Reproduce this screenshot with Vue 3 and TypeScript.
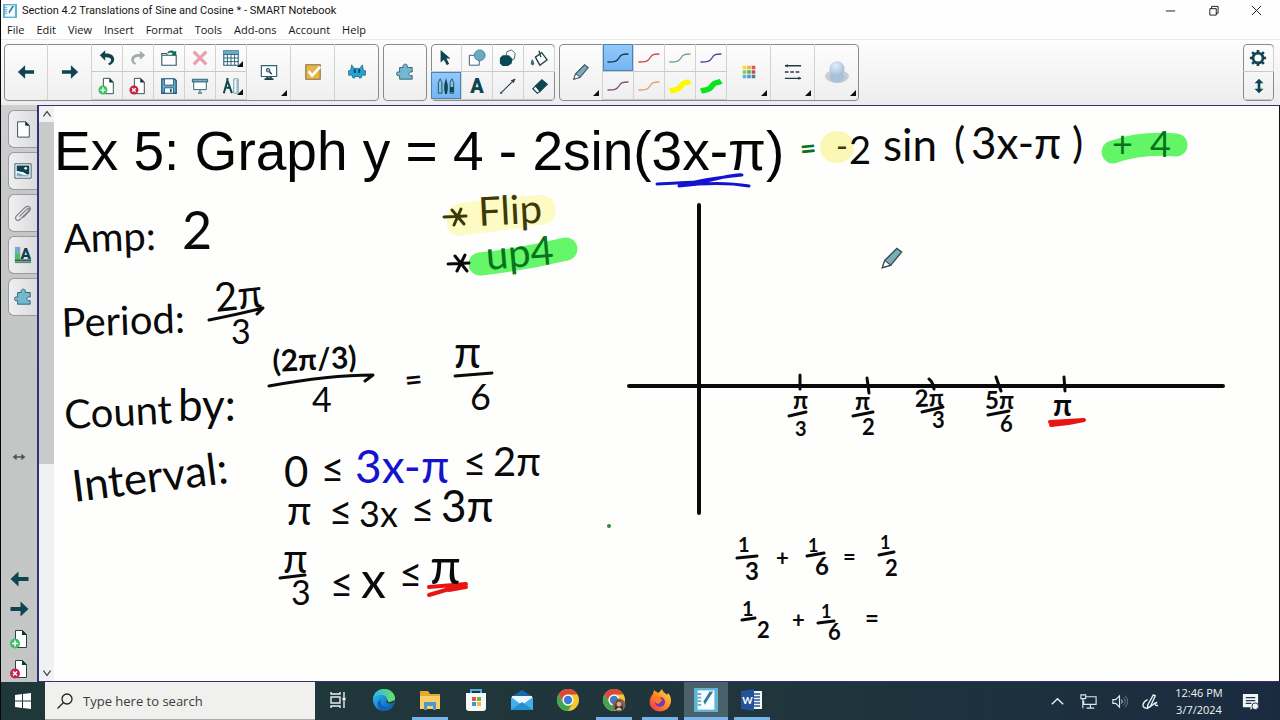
<script setup lang="ts">
interface Tool { icon: string; label: string; big?: boolean; more?: boolean; active?: boolean; ink?: string; wide?: boolean }
interface Note { t: string; x: number; y: number; s: number; r?: number; c?: string }

const menus: string[] = ['File', 'Edit', 'View', 'Insert', 'Format', 'Tools', 'Add-ons', 'Account', 'Help']

const groups: Tool[][] = [
  [
    { icon: 'back', label: 'Previous page', big: true },
    { icon: 'forward', label: 'Next page', big: true },
    { icon: 'undo', label: 'Undo' },
    { icon: 'page-add', label: 'Add page' },
    { icon: 'redo', label: 'Redo' },
    { icon: 'page-del', label: 'Delete page' },
    { icon: 'open', label: 'Open' },
    { icon: 'save', label: 'Save' },
    { icon: 'cross', label: 'Delete' },
    { icon: 'shade', label: 'Screen shade' },
    { icon: 'table', label: 'Table', more: true },
    { icon: 'measure', label: 'Measurement tools', more: true },
    { icon: 'monitor', label: 'View screens', big: true, more: true },
    { icon: 'check', label: 'Response', big: true },
    { icon: 'monster', label: 'Activity builder', big: true },
  ],
  [{ icon: 'puzzle', label: 'Add-ons', big: true }],
  [
    { icon: 'select', label: 'Select' },
    { icon: 'pens', label: 'Pens', active: true },
    { icon: 'shapes', label: 'Shapes' },
    { icon: 'text', label: 'Text' },
    { icon: 'polygons', label: 'Regular polygons' },
    { icon: 'line', label: 'Lines' },
    { icon: 'fill', label: 'Fill' },
    { icon: 'eraser', label: 'Eraser' },
  ],
  [
    { icon: 'pencil', label: 'Pen types', big: true, more: true },
    { icon: 'ink', label: 'Black pen', ink: '#123c58', active: true },
    { icon: 'ink', label: 'Purple pen', ink: '#81507e' },
    { icon: 'ink', label: 'Red pen', ink: '#c94a55' },
    { icon: 'ink', label: 'Orange pen', ink: '#e0a078' },
    { icon: 'ink', label: 'Green pen', ink: '#7ba184' },
    { icon: 'ink', label: 'Yellow highlighter', ink: '#fbf800', wide: true },
    { icon: 'ink', label: 'Blue pen', ink: '#4c4a9e' },
    { icon: 'ink', label: 'Green highlighter', ink: '#09e51c', wide: true },
    { icon: 'colors', label: 'Color', big: true, more: true },
    { icon: 'lines', label: 'Line style', big: true, more: true },
    { icon: 'stamp', label: 'Transparency', big: true, more: true },
  ],
]

const tabs = [
  { icon: 'page', label: 'Page sorter' },
  { icon: 'gallery', label: 'Gallery' },
  { icon: 'clip', label: 'Attachments' },
  { icon: 'props', label: 'Properties' },
  { icon: 'puzzle', label: 'Add-ons' },
]
const sideActions = [
  { icon: 'back', label: 'Previous page' },
  { icon: 'forward', label: 'Next page' },
  { icon: 'page-add', label: 'Add page' },
  { icon: 'page-del', label: 'Delete page' },
]
const apps = [
  { icon: 'taskview', label: 'Task View' },
  { icon: 'edge', label: 'Microsoft Edge' },
  { icon: 'folder', label: 'File Explorer', open: true },
  { icon: 'store', label: 'Microsoft Store' },
  { icon: 'mail', label: 'Mail' },
  { icon: 'chrome', label: 'Google Chrome' },
  { icon: 'chrome-user', label: 'Google Chrome profile', open: true },
  { icon: 'firefox', label: 'Firefox', open: true },
  { icon: 'notebook', label: 'SMART Notebook', open: true, active: true },
  { icon: 'word', label: 'Word', open: true },
]
const tray = [
  { icon: 'chevron', label: 'Show hidden icons' },
  { icon: 'network', label: 'Network' },
  { icon: 'volume', label: 'Volume' },
  { icon: 'inkpen', label: 'Ink workspace' },
]

const blue = '#1414cf'
const olive = '#3b3a08'
const green = '#08731c'

const notes: Note[] = [
  { t: 'Amp:', x: 64, y: 253, s: 40, r: -2 },
  { t: '2', x: 182, y: 249, s: 52 },
  { t: 'Period:', x: 62, y: 337, s: 40, r: -2 },
  { t: '2π', x: 216, y: 312, s: 40, r: -6 },
  { t: '3', x: 231, y: 344, s: 34 },
  { t: 'Count', x: 65, y: 429, s: 40, r: -3 },
  { t: 'by:', x: 178, y: 421, s: 44 },
  { t: 'Interval:', x: 74, y: 502, s: 44, r: -7 },
  { t: '(2π/3)', x: 273, y: 372, s: 30, r: -3 },
  { t: '4', x: 312, y: 412, s: 34 },
  { t: '=', x: 406, y: 391, s: 30, r: -6 },
  { t: 'π', x: 454, y: 368, s: 44 },
  { t: '6', x: 470, y: 410, s: 36 },
  { t: '0', x: 284, y: 487, s: 42 },
  { t: '≤', x: 321, y: 483, s: 40 },
  { t: '3x-π', x: 355, y: 483, s: 46, c: blue },
  { t: '≤', x: 463, y: 477, s: 40 },
  { t: '2π', x: 493, y: 476, s: 40 },
  { t: 'π', x: 287, y: 525, s: 40 },
  { t: '≤', x: 329, y: 526, s: 40 },
  { t: '3x', x: 359, y: 527, s: 36 },
  { t: '≤', x: 411, y: 523, s: 40 },
  { t: '3π', x: 441, y: 522, s: 44 },
  { t: 'π', x: 283, y: 573, s: 40 },
  { t: '3', x: 291, y: 605, s: 34 },
  { t: '≤', x: 330, y: 598, s: 40 },
  { t: 'x', x: 361, y: 598, s: 50 },
  { t: '≤', x: 399, y: 588, s: 40 },
  { t: 'π', x: 430, y: 584, s: 50 },
  { t: 'Flip', x: 479, y: 226, s: 40, r: -3, c: olive },
  { t: 'up4', x: 487, y: 270, s: 40, r: -5, c: green },
  { t: '=', x: 801, y: 159, s: 28, r: -6, c: green },
  { t: '-', x: 836, y: 158, s: 32, c: olive },
  { t: '2', x: 849, y: 164, s: 38 },
  { t: 'sin', x: 883, y: 161, s: 44 },
  { t: '(', x: 954, y: 158, s: 42 },
  { t: '3x-π', x: 971, y: 159, s: 44 },
  { t: ')', x: 1072, y: 158, s: 42 },
  { t: '+', x: 1112, y: 157, s: 36, c: green },
  { t: '4', x: 1150, y: 157, s: 36, c: green },
  { t: 'π', x: 793, y: 409, s: 24 },
  { t: '3', x: 795, y: 436, s: 20 },
  { t: 'π', x: 855, y: 410, s: 24 },
  { t: '2', x: 862, y: 435, s: 22 },
  { t: '2π', x: 915, y: 407, s: 24, r: -2 },
  { t: '3', x: 932, y: 428, s: 22 },
  { t: '5π', x: 985, y: 409, s: 24 },
  { t: '6', x: 1000, y: 432, s: 22 },
  { t: 'π', x: 1053, y: 416, s: 30 },
  { t: '1', x: 738, y: 552, s: 20 },
  { t: '3', x: 745, y: 580, s: 24 },
  { t: '+', x: 776, y: 566, s: 22 },
  { t: '1', x: 808, y: 552, s: 18 },
  { t: '6', x: 815, y: 575, s: 24 },
  { t: '=', x: 843, y: 565, s: 22 },
  { t: '1', x: 880, y: 549, s: 18 },
  { t: '2', x: 885, y: 576, s: 22 },
  { t: '1', x: 742, y: 616, s: 20 },
  { t: '2', x: 757, y: 638, s: 22 },
  { t: '+', x: 792, y: 628, s: 22 },
  { t: '1', x: 821, y: 618, s: 18 },
  { t: '6', x: 828, y: 640, s: 22 },
  { t: '=', x: 865, y: 627, s: 24 },
]

const place = (n: Note): string => `translate(${n.x} ${n.y}) rotate(${n.r ?? 0})`
</script>

<template>
  <div class="window">
    <svg class="defs" aria-hidden="true">
      <defs>
        <linearGradient id="edgeA" x1="0" y1="0" x2="1" y2="1"><stop offset="0" stop-color="#35c1f1" /><stop offset=".5" stop-color="#1b8ad8" /><stop offset="1" stop-color="#0c4fa0" /></linearGradient>
        <linearGradient id="edgeB" x1="0" y1="0" x2="1" y2="0"><stop offset="0" stop-color="#2fb8e8" /><stop offset="1" stop-color="#6be25e" /></linearGradient>
        <linearGradient id="fire" x1="1" y1="0" x2="0" y2="1"><stop offset="0" stop-color="#ffe14a" /><stop offset=".5" stop-color="#ff8a1e" /><stop offset="1" stop-color="#f0245c" /></linearGradient>
        <radialGradient id="glass" cx=".4" cy=".3" r=".8"><stop offset="0" stop-color="#e3edf7" /><stop offset="1" stop-color="#9ab6d4" /></radialGradient>
        <symbol id="back" viewBox="0 0 20 20"><path d="M1 10 9 2.500V8h10v4H9v5.500z" fill="#0f4550" /></symbol>
        <symbol id="forward" viewBox="0 0 20 20"><path d="M19 10 11 2.500V8H1v4h10v5.500z" fill="#0f4550" /></symbol>
        <symbol id="undo" viewBox="0 0 20 20"><path d="M2 7 8 1.500V5c6-.5 10 2 10 6.500 0 3-2 5-5 6.500l-2-1.500c3-1.500 3.500-3 3.500-4.500 0-2-2.500-3-6.500-2.800V13z" fill="#0f4550" /></symbol>
        <symbol id="redo" viewBox="0 0 20 20"><path d="M18 7l-6-5v3.500C6 5 2.500 8 2.500 12c0 2.500 1.500 4.500 4 5.500l1.500-1.500c-2-1-2.700-2.500-2.500-4 .3-2.500 3-3.500 6.500-3.300V12z" fill="#a3abac" /></symbol>
        <symbol id="page" viewBox="0 0 20 20"><path d="M4 2h9l4 4v13H4z" fill="#fff" stroke="#24444c" stroke-width="1" /><path d="M12.500 1.500 17.500 6.500h-5z" fill="#12333a" /></symbol>
        <symbol id="page-add" viewBox="0 0 20 20"><path d="M6 1.500h7l4 4V18.500H6z" fill="#fff" stroke="#24444c" /><path d="M12.500 1 17.500 6h-5z" fill="#12333a" /><circle cx="5.500" cy="14.500" r="5" fill="#3fbd62" /><path d="M5.500 11.500v6M2.500 14.500h6" stroke="#fff" stroke-width="1.500" /></symbol>
        <symbol id="page-del" viewBox="0 0 20 20"><path d="M6 1.500h7l4 4V18.500H6z" fill="#fff" stroke="#24444c" /><path d="M12.500 1 17.500 6h-5z" fill="#12333a" /><circle cx="5.500" cy="14.500" r="5" fill="#c62349" /><path d="m3.500 12.500 4 4m0-4-4 4" stroke="#fff" stroke-width="1.500" /></symbol>
        <symbol id="open" viewBox="0 0 20 20"><path d="M2 7V5h5l1.500 2M2 7h16v11H2z" fill="#fff" stroke="#295a5b" stroke-width="1.200" /><path d="M8 4c2-3 6-3 8-1l2-1v5h-5.500l1.700-1.700C12.500 3.500 10.500 3.500 9 5z" fill="#116b58" /></symbol>
        <symbol id="save" viewBox="0 0 20 20"><path d="M2 2h14l2 2v14H2z" fill="#6da9c8" stroke="#225b77" stroke-width="1.500" /><path d="M5 2h10v7H5zM5 12h10v6H5z" fill="#f5fbff" stroke="#225b77" /><path d="M11 13h2v4h-2z" fill="#225b77" /></symbol>
        <symbol id="cross" viewBox="0 0 20 20"><path d="m3 3 14 14M17 3 3 17" stroke="#e6a1ad" stroke-width="3.500" /></symbol>
        <symbol id="shade" viewBox="0 0 20 20"><path d="M3 5h14v9H3z" fill="#fff" stroke="#245965" /><path d="M1.500 2.500h17v3h-17z" fill="#75abc7" stroke="#245965" /><path d="M10 14v2m-2 2 2-2 2 2z" stroke="#245965" fill="none" /></symbol>
        <symbol id="table" viewBox="0 0 20 20"><path d="M2 2h16v16H2z" fill="#fff" stroke="#205e71" stroke-width="1.200" /><path d="M2 2h16v4H2z" fill="#70a9c6" /><path d="M2 6h16M2 10h16M2 14h16M6 6v12m4-12v12m4-12v12" stroke="#205e71" /></symbol>
        <symbol id="measure" viewBox="0 0 20 20"><path d="M6 1v3M6 4 2 18M6 4l5 14M3 12h7" stroke="#0f4550" stroke-width="2.200" fill="none" /><path d="M13 2h5v16h-5zM16 4h2m-2 2h2m-2 2h2m-2 2h2m-2 2h2m-2 2h2m-2 2h2" fill="#e9f2f5" stroke="#729aa8" /></symbol>
        <symbol id="monitor" viewBox="0 0 20 20"><path d="M1.500 3h17v12h-17z" fill="#fff" stroke="#2c6275" stroke-width="1.300" /><path d="M8 15v2h4v-2M5 18h10" stroke="#24404a" stroke-width="2" fill="none" /><circle cx="9" cy="8" r="2" fill="#8fbbcf" stroke="#24404a" /><path d="m10.500 9.500 2.500 3" stroke="#24404a" stroke-width="1.500" /></symbol>
        <symbol id="check" viewBox="0 0 20 20"><path d="M2 2h16v16H2z" fill="#e9b34a" stroke="#85713f" stroke-width="1.200" /><path d="m5 9 4 5 9-10" stroke="#fff" stroke-width="3" fill="none" /></symbol>
        <symbol id="monster" viewBox="0 0 20 20"><path d="m4 2 3 4h6l3-4 1 6 3 1-1 5-3-1-1 3-2 1-1-2H8l-1 2-2-1-1-3-3 1-1-5 3-1z" fill="#23a4d3" stroke="#0d526d" stroke-width=".7" /><path d="M6.500 7h2v4h-2zm5 0h2v4h-2z" fill="#0b3c55" /></symbol>
        <symbol id="puzzle" viewBox="0 0 20 20"><path d="M4 5h4c-1.500-5 6-5 4.500 0H18v5c-5-1-5 5 0 4v4H4v-4c-5 1-5-5 0-4z" fill="#73b7d1" stroke="#315e70" /></symbol>
        <symbol id="select" viewBox="0 0 20 20"><path d="M4 1v14l3.500-3L11 18l2.500-1.500-3-6H15z" fill="#0f4550" /></symbol>
        <symbol id="pens" viewBox="0 0 20 20"><path d="M1.500 6 3.500 2l2 4v12h-4zM14.500 6l2-4 2 4v12h-4z" fill="#8ebfd9" stroke="#164e65" /><path d="m8 9 2-8 2 8v5l-1 5H9l-1-5zM14.500 11h4v6h-4z" fill="#0f4550" /></symbol>
        <symbol id="shapes" viewBox="0 0 20 20"><path d="M1.500 7h11v11h-11z" fill="#fff" stroke="#2d5260" /><circle cx="13" cy="7" r="6" fill="#6aaac5" stroke="#437c94" /></symbol>
        <symbol id="text" viewBox="0 0 20 20"><text x="10" y="18" text-anchor="middle" font-family="Roboto, sans-serif" font-weight="900" font-size="22" fill="#0f4550">A</text></symbol>
        <symbol id="polygons" viewBox="0 0 20 20"><path d="m9 3 5-2 4 4-1 6-4 2-6-3z" fill="#fff" stroke="#35606a" /><path d="M4 7h7l4 4-1 5-4 3H4l-3-3V10z" fill="#0a4852" /></symbol>
        <symbol id="line" viewBox="0 0 20 20"><path d="M2 18 18 2" stroke="#24414d" stroke-width="1.300" /><path d="m18 2-5 1.500L16.500 7zM1 19l1-3 2 2z" fill="#24414d" /></symbol>
        <symbol id="fill" viewBox="0 0 20 20"><path d="m6 9 7-5 6 8-8 6z" fill="#fff" stroke="#24444c" stroke-width="1.500" /><path d="m10 2 2 7" fill="none" stroke="#24444c" stroke-width="1.500" /><path d="M2.500 11c-3 5-1 7 .5 7s3-2-.5-7" fill="#3a6873" /></symbol>
        <symbol id="eraser" viewBox="0 0 20 20"><path d="m12 3 6 5-8 8-5-6z" fill="#0e4551" stroke="#0e4551" stroke-width="1.300" /><path d="m5 10 5 6-3 2-5-5z" fill="#fff" stroke="#0e4551" stroke-width="1.300" /></symbol>
        <symbol id="pencil" viewBox="0 0 20 20"><path d="m2 18 2-6L14 2l4 3L9 16z" fill="#7fabb9" stroke="#37525b" stroke-width="1.200" /><path d="m2 18 2-6 5 4z" fill="#fff" stroke="#37525b" /></symbol>
        <symbol id="ink" viewBox="0 0 24 16"><path d="M2 12c6 0 9-.5 11-4s4-4 9-4" fill="none" stroke="currentColor" stroke-width="1.400" stroke-linecap="round" /></symbol>
        <symbol id="marker" viewBox="0 0 24 16"><path d="M2 13c6-2 8 0 11-5s5-2 9-5" fill="none" stroke="currentColor" stroke-width="5.500" /></symbol>
        <symbol id="colors" viewBox="0 0 20 20"><path d="M3 3h4v4H3z" fill="#f1d83e" /><path d="M8 3h4v4H8z" fill="#f2b23d" /><path d="M13 3h4v4h-4z" fill="#dd5848" /><path d="M3 8h4v4H3z" fill="#8acb5d" /><path d="M8 8h4v4H8z" fill="#52b84e" /><path d="M13 8h4v4h-4z" fill="#bd4d5c" /><path d="M3 13h4v4H3z" fill="#5db3dc" /><path d="M8 13h4v4H8z" fill="#4e94d0" /><path d="M13 13h4v4h-4z" fill="#557b8a" /></symbol>
        <symbol id="lines" viewBox="0 0 20 20"><path d="M1 3h18M1 17h18" stroke="#213d44" stroke-width="1.500" /><path d="M1 10h18" stroke="#213d44" stroke-width="1.500" stroke-dasharray="4 2" /><path d="M1 3l3-2v4zm18 14-3-2v4z" fill="#213d44" /></symbol>
        <symbol id="stamp" viewBox="0 0 24 24"><ellipse cx="12" cy="16" rx="11" ry="6" fill="#c9ced5" /><ellipse cx="12" cy="17" rx="7" ry="5" fill="#a9c2dc" /><circle cx="12" cy="9" r="7" fill="url(#glass)" /></symbol>
        <symbol id="gear" viewBox="0 0 20 20"><circle cx="10" cy="10" r="5.500" fill="#fff" stroke="#0f4550" stroke-width="3" /><path d="M10 1v3m0 12v3M1 10h3m12 0h3M3.500 3.500l2.500 2.500m8 8 2.500 2.500M16.500 3.500 14 6m-8 8-2.500 2.500" stroke="#0f4550" stroke-width="3" /></symbol>
        <symbol id="updown" viewBox="0 0 20 20"><path d="m10 2 5 5h-3.500v6H15l-5 5-5-5h3.500V7H5z" fill="#0f4550" /></symbol>
        <symbol id="leftright" viewBox="0 0 20 20"><path d="m2 10 5-4v3h6V6l5 4-5 4v-3H7v3z" fill="#4d575a" /></symbol>
        <symbol id="gallery" viewBox="0 0 20 20"><path d="M1 2h18v16H1z" fill="#fff" stroke="#28535f" /><path d="M3 4h14v10c-5 0-5-3-8-3-2 0-3-1-6-1z" fill="#0e4050" /><path d="M3 12c4 0 5 3 14 3v1H3z" fill="#73acc8" /><circle cx="13" cy="7" r="1.500" fill="#fff" /></symbol>
        <symbol id="clip" viewBox="0 0 20 20"><path d="m6 14 8-8c3-2 4 0 2 2l-9 9c-4 3-7-1-4-4l9-9c4-3 8 0 5 4l-7 7" fill="none" stroke="#7b8083" stroke-width="1.300" /></symbol>
        <symbol id="props" viewBox="0 0 20 20"><path d="M1 1h6v7H1z" fill="#78a9ce" /><path d="M1 8h6v7H1z" fill="#4dbd63" /><path d="M1 17h18v2H1z" fill="#4c8d68" /><path d="M1 15h18v1.500H1z" fill="#173a43" /><text x="13" y="14" text-anchor="middle" font-family="Roboto, sans-serif" font-weight="900" font-size="17" fill="#123f4d">A</text></symbol>
        <symbol id="notebook" viewBox="0 0 20 20"><path d="M0 0h20v20H0z" fill="#5fb3d5" /><path d="M3 2h14v16H3z" fill="#f8fdff" /><path d="M3 5h3M3 8h3m-3 3h3m-3 3h3" stroke="#5fb3d5" stroke-width="1.500" /><path d="M16 3 9 14l-1-3 5-8z" fill="#357d9c" /></symbol>
        <symbol id="win" viewBox="0 0 16 16"><path d="m0 2 7-1v6.500H0zm8-1 8-1v7.500H8zM0 8.500h7V15l-7-1zm8 0h8V16l-8-1z" fill="#fff" /></symbol>
        <symbol id="taskview" viewBox="0 0 24 24"><path d="M5 9h9v6H5zM5 4v2h9V4M5 20v-2h9v2M18 4v5m0 4v7" fill="none" stroke="#e8eeee" stroke-width="1.400" /><path d="M16.500 9.500h3v3h-3z" fill="#fff" /></symbol>
        <symbol id="edge" viewBox="0 0 24 24"><circle cx="12" cy="12" r="11" fill="url(#edgeA)" /><path d="M1 11C2 3 8 1 12 1c7 0 11 5 11 9 0 5-5 6-8 5-2-1 0-2 0-4 0-3-4-5-8-4-3 .5-5 2-6 4z" fill="url(#edgeB)" /><path d="M9 11c-2 5 2 10 12 8-4 5-10 4-12 3-5-3-4-9 0-11z" fill="#1260b4" /><path d="M15 15c-2-1 0-2 0-4 2 3-1 5 8 1-1 4-5 4-8 3z" fill="#203638" /></symbol>
        <symbol id="folder" viewBox="0 0 24 24"><path d="M2 3h8l2 3h10v15H2z" fill="#e5a832" /><path d="M2 8h20v13H2z" fill="#f7d067" /><path d="M6 22v-8h12v8h-3v-4H9v4z" fill="#4e98ce" /></symbol>
        <symbol id="store" viewBox="0 0 24 24"><path d="M7 6V2h10v4" stroke="#48b1e4" stroke-width="2" fill="none" /><path d="M2 5h20v15q0 3-3 3H5q-3 0-3-3z" fill="#f6f8f9" /><path d="M8 9h4v4H8z" fill="#e15b34" /><path d="M13 9h4v4h-4z" fill="#6fb542" /><path d="M8 14h4v4H8z" fill="#3598db" /><path d="M13 14h4v4h-4z" fill="#efba39" /></symbol>
        <symbol id="mail" viewBox="0 0 24 24"><path d="m1 9 11-7 11 7v13H1z" fill="#126baf" /><path d="M2 8h20v12H2z" fill="#edf6fb" /><path d="m1 9 11 8 11-8v13H1z" fill="#42afe8" /><path d="m1 22 11-8 11 8z" fill="#258fd2" /></symbol>
        <symbol id="chrome" viewBox="0 0 24 24"><circle cx="12" cy="12" r="11" fill="#f4c82f" /><path d="M2.500 6.500A11 11 0 0 1 21.500 6.500H12a5.500 5.500 0 0 0-5 8z" fill="#dd483c" /><path d="M2.500 6.500A11 11 0 0 0 12 23l5-8.500a5.500 5.500 0 0 1-10 0z" fill="#40a456" /><circle cx="12" cy="12" r="5.500" fill="#fff" /><circle cx="12" cy="12" r="4.200" fill="#347ed9" /></symbol>
        <symbol id="chrome-user" viewBox="0 0 24 24"><use href="#chrome" width="24" height="24" /><circle cx="17" cy="17" r="6.500" fill="#836554" /><path d="M13 22c-1-13 8-13 8 0z" fill="#4b3028" /><circle cx="17" cy="16" r="2.500" fill="#dca98f" /><path d="M14 22q3-5 6 0z" fill="#c5d0d4" /></symbol>
        <symbol id="firefox" viewBox="0 0 24 24"><path d="M5 6c0-2 1-3 1-4 1 1 3 2 4 3 2-1 3-3 4-4 1 4 4 4 5 6l1-2c3 3 4 8 2 12-4 9-17 8-20 0C1 13 2 9 5 6z" fill="url(#fire)" /><circle cx="12" cy="14" r="5" fill="#7439b6" /><path d="M7 9c4-2 6 1 7 3 0 2-3 2-3 4-3 0-5-3-4-7z" fill="#ff7e25" /></symbol>
        <symbol id="word" viewBox="0 0 24 24"><path d="M10 3h12v18H10z" fill="#f3f7fb" /><path d="M14 6h6m-6 3h6m-6 3h6m-6 3h6m-6 3h6" stroke="#2b5797" stroke-width="1.300" /><path d="m1 3 13-2v22L1 21z" fill="#24539b" /><text x="7.500" y="16" text-anchor="middle" font-family="Lato, sans-serif" font-weight="700" font-size="10" fill="#fff">W</text></symbol>
        <symbol id="chevron" viewBox="0 0 20 20"><path d="m4 13 6-6 6 6" fill="none" stroke="#e7edf0" stroke-width="1.500" /></symbol>
        <symbol id="network" viewBox="0 0 20 20"><path d="M7 5h11v8H5V9M12 13v4m-4 0h8M2 3h5v4H2zM4 7v10" fill="none" stroke="#dfe6e9" stroke-width="1.200" /></symbol>
        <symbol id="volume" viewBox="0 0 20 20"><path d="M3 8h3l4-4v12l-4-4H3z" fill="none" stroke="#e5ebee" stroke-width="1.200" /><path d="M12 8q2 2 0 4" fill="none" stroke="#e5ebee" /><path d="M14 6q4 4 0 8m2-10q5 6 0 12" fill="none" stroke="#71818a" /></symbol>
        <symbol id="inkpen" viewBox="0 0 20 20"><path d="m7 14 6-11 2 1-5 11-3 2zM7 8c-5 2-7 8-2 9 7 0 7-6 12-6-3 1-3 4 1 3" fill="none" stroke="#eef2f3" stroke-width="1.400" /></symbol>
        <symbol id="notice" viewBox="0 0 20 20"><path d="M2 2h16v14h-5l-3 3v-3H2z" fill="#f2f5f7" /><path d="M5 6h10M5 9h10M5 12h6" stroke="#24364a" stroke-width="1.300" /><circle cx="15" cy="15" r="3.500" fill="#f2f5f7" stroke="#24364a" /></symbol>
      </defs>
    </svg>

    <header class="titlebar">
      <svg class="app-icon"><use href="#notebook" /></svg>
      <span class="title">Section 4.2 Translations of Sine and Cosine * - SMART Notebook</span>
      <div class="controls">
        <button aria-label="Minimize"><svg viewBox="0 0 12 12"><path d="M1 6.500h10" /></svg></button>
        <button aria-label="Restore"><svg viewBox="0 0 12 12"><path d="M2 4h7v7H2zM4 4V1.500h7V9H9" /></svg></button>
        <button aria-label="Close"><svg viewBox="0 0 12 12"><path d="m1 1 10 10M11 1 1 11" /></svg></button>
      </div>
    </header>

    <nav class="menubar" aria-label="Main menu">
      <button v-for="m in menus" :key="m">{{ m }}</button>
    </nav>

    <div class="toolbar">
      <div v-for="(g, gi) in groups" :key="gi" class="group">
        <button v-for="tool in g" :key="tool.label" class="tool" :class="{ big: tool.big, active: tool.active }" :aria-label="tool.label">
          <svg v-if="tool.icon === 'ink'" class="ink-icon" :style="{ color: tool.ink }"><use :href="tool.wide ? '#marker' : '#ink'" /></svg>
          <svg v-else class="icon" :class="'i-' + tool.icon"><use :href="'#' + tool.icon" /></svg>
          <span v-if="tool.more" class="corner"></span>
        </button>
      </div>
      <div class="group end">
        <button class="tool" aria-label="Customize toolbar"><svg class="icon"><use href="#gear" /></svg></button>
        <button class="tool" aria-label="Move toolbar"><svg class="icon"><use href="#updown" /></svg></button>
      </div>
    </div>

    <main class="work">
      <aside class="side">
        <div class="tabs">
          <button v-for="t in tabs" :key="t.icon" class="tab" :aria-label="t.label"><svg><use :href="'#' + t.icon" /></svg></button>
        </div>
        <button class="mover" aria-label="Move side panel"><svg><use href="#leftright" /></svg></button>
        <div class="side-actions">
          <button v-for="a in sideActions" :key="a.icon" :aria-label="a.label"><svg><use :href="'#' + a.icon" /></svg></button>
        </div>
      </aside>
      <div class="scroll">
        <button aria-label="Scroll up"><svg viewBox="0 0 10 10"><path d="m2 7 3-4 3 4" /></svg></button>
        <div class="track"><div class="thumb"></div></div>
        <button aria-label="Scroll down"><svg viewBox="0 0 10 10"><path d="m2 3 3 4 3-4" /></svg></button>
      </div>
      <section class="canvas">
        <h1>Ex 5: Graph y = 4 - 2sin(3x-π)</h1>
        <svg class="ink-layer" viewBox="54 106 1225 575" preserveAspectRatio="xMinYMin meet">
          <g class="highlight">
            <path d="M462 218q40-6 79-8" stroke="#fdfbc3" stroke-width="30" />
            <path d="M459 224q34-5 63-8" stroke="#fdfbc3" stroke-width="24" />
            <path d="M480 264q45-5 86-15" stroke="#65f769" stroke-width="23" />
            <path d="M836 147h2" stroke="#fbf8b6" stroke-width="32" />
            <path d="M1113 152q28-10 63-7" stroke="#62f666" stroke-width="23" />
          </g>
          <g class="stroke axis">
            <path d="M699 205v308M629 386h594" />
          </g>
          <g class="stroke">
            <path d="M800 375v14M867 378l2 15M929 379q4 3 5 10M996 377l5 14M1064 377l1 14" />
            <path d="M209 320q30-6 54-12l-6 6M269 386q60-11 104-11l-8 6M455 376l37-3M280 578l25-3" />
            <path d="M789 416l17-4M853 416l20-4M922 412l21-5M988 415l21-4M737 558l20-2M807 556l17-3M879 555l15-3M742 620l13-2M818 623l16-2" />
            <path d="M444 217l22-1M452 210l12 14M461 209l-7 16" stroke="#3b3a08" />
            <path d="M448 264l21-1M455 256l12 15M465 255l-8 16" />
          </g>
          <path class="blue" d="M657 184q45-2 50-3 32-8 35-6-40 4-63 11 40-5 70 0" />
          <g class="red">
            <path d="M429 587l37-3-37 11M449 590l17-3" />
            <path d="M1051 425q16-1 33-5l-34 2" />
          </g>
          <circle cx="609" cy="526" r="2" fill="#288c42" />
          <text v-for="(n, i) in notes" :key="i" :class="{ small: n.s <= 30 }" :transform="place(n)" :font-size="n.s" :fill="n.c ?? '#0a0a0a'">{{ n.t }}</text>
          <use href="#pencil" x="880" y="246" width="24" height="24" />
        </svg>
      </section>
    </main>

    <footer class="taskbar">
      <button class="start" aria-label="Start"><svg><use href="#win" /></svg></button>
      <label class="search">
        <svg viewBox="0 0 16 16"><circle cx="10" cy="6" r="5" /><path d="m6.500 9.500-6 6" /></svg>
        <input type="text" placeholder="Type here to search" aria-label="Type here to search" />
      </label>
      <div class="apps">
        <button v-for="a in apps" :key="a.icon" :class="{ open: a.open, active: a.active }" :aria-label="a.label"><svg><use :href="'#' + a.icon" /></svg></button>
      </div>
      <div class="tray">
        <button v-for="t in tray" :key="t.icon" :aria-label="t.label"><svg><use :href="'#' + t.icon" /></svg></button>
        <time class="clock" datetime="2024-03-07T12:46"><span>12:46 PM</span><span>3/7/2024</span></time>
        <button class="notice" aria-label="Notifications"><svg><use href="#notice" /></svg></button>
      </div>
    </footer>
  </div>
</template>

<style>
html, body { margin: 0; }
</style>

<style scoped>
* { box-sizing: border-box; }
button { margin: 0; padding: 0; border: 0; background: none; font: inherit; color: inherit; display: flex; align-items: center; justify-content: center; }
svg { display: block; flex: none; }
.defs { position: absolute; width: 0; height: 0; }
.window { min-height: 100vh; display: flex; flex-direction: column; background: #fefefe; font-family: "Open Sans", "Noto Sans", sans-serif; color: #161616; border-left: 1px solid #050505; }
.titlebar { height: 21px; display: flex; align-items: center; padding-left: 2px; font-size: 11px; font-family: Roboto, "Open Sans", sans-serif; }
.app-icon { width: 14px; height: 14px; margin-right: 5px; }
.title { white-space: nowrap; }
.controls { margin-left: auto; display: flex; padding-right: 2px; }
.controls button { width: 43px; height: 20px; }
.controls svg { width: 11px; height: 11px; fill: none; stroke: #111; stroke-width: 1; }
.menubar { height: 18px; display: flex; align-items: center; gap: 12px; padding: 0 0 1px 6px; font-size: 11px; }
.toolbar { height: 66px; display: flex; gap: 4px; padding: 4px 6px 5px 3px; border-top: 1px solid #e9e9ea; background: linear-gradient(#fdfdfd, #ededee); }
.group { display: grid; grid-template-rows: 28px 28px; grid-auto-flow: column; height: 57px; border-radius: 4px; outline: 1px solid #8b8b8b; outline-offset: -1px; background: linear-gradient(#fdfdfd, #efeff0); overflow: hidden; }
.group.end { margin-left: auto; }
.tool { position: relative; width: 31px; border-right: 1px solid #d2d2d3; border-bottom: 1px solid #c9c9ca; }
.tool:nth-last-child(1) { border-right: 0; }
.tool.big { width: 44px; grid-row: span 2; border-bottom: 0; }
.tool.active { background: linear-gradient(#93cafa, #73b5f2); box-shadow: inset 0 0 0 1px #4a83b8; }
.icon { width: 18px; height: 18px; }
.i-stamp { width: 26px; height: 26px; }
.ink-icon { width: 24px; height: 16px; }
.corner { position: absolute; right: 3px; bottom: 4px; border-left: 6px solid transparent; border-bottom: 6px solid #101010; }
.work { flex: 1; display: flex; min-height: 0; }
.side { width: 36px; background: linear-gradient(#cecfd1, #c4c7c6 20%, #c4c6c6); display: flex; flex-direction: column; align-items: stretch; padding-top: 5px; }
.tabs { display: flex; flex-direction: column; gap: 4px; padding-left: 7px; }
.tab { height: 38px; border: 1px solid #9a9b9d; border-right: 0; border-radius: 6px 0 0 6px; background: linear-gradient(90deg, #efeff1, #dcdcdf); }
.tab svg { width: 18px; height: 18px; }
.mover { margin: auto 0 102px; height: 20px; }
.mover svg { width: 16px; height: 16px; }
.side-actions { display: flex; flex-direction: column; gap: 10px; padding-bottom: 3px; }
.side-actions button { height: 20px; }
.side-actions svg { width: 21px; height: 20px; }
.scroll { width: 17px; border: solid #34307c; border-width: 1px 0 1px 2px; background: #f0f1f2; display: flex; flex-direction: column; }
.scroll button { height: 16px; }
.scroll svg { width: 12px; height: 12px; fill: none; stroke: #444; stroke-width: 1; }
.track { flex: 1; }
.thumb { height: 63%; background: #c9cbca; }
.canvas { position: relative; flex: 1; background: #fefffd; border: solid #34307c; border-width: 1px 0; border-right: 1px solid #111; overflow: hidden; }
h1 { margin: 0; padding: 13px 0 0; font: 400 55px/64px "Liberation Sans", Arial, sans-serif; color: #050505; white-space: nowrap; }
.ink-layer { position: absolute; inset: 0; width: 100%; height: 100%; font-family: Lato, sans-serif; }
.small { font-weight: 700; }
.highlight, .stroke, .blue, .red { fill: none; stroke-linecap: round; stroke-linejoin: round; }
.stroke { stroke: #0a0a0a; stroke-width: 3; }
.axis { stroke-width: 4; }
.blue { stroke: #1414cf; stroke-width: 3; }
.red { stroke: #e81515; stroke-width: 4; }
.taskbar { height: 38px; display: flex; align-items: stretch; background: linear-gradient(90deg, #1f3739, #20353c 60%, #1a2b40); color: #f1f4f6; }
.start { width: 44px; }
.start svg { width: 16px; height: 16px; }
.search { width: 270px; display: flex; align-items: center; gap: 10px; padding-left: 12px; background: #f0f0ef; color: #333; border-bottom: 1px solid #aaa; }
.search svg { width: 16px; height: 16px; fill: none; stroke: #222; stroke-width: 1.300; }
.search input { min-width: 0; flex: 1; border: 0; padding: 0; background: none; outline: 0; font: 13px "Open Sans", "Noto Sans", sans-serif; color: #333; }
.search input::placeholder { color: #3b3b3b; opacity: 1; }
.apps { display: flex; gap: 2px; padding-left: 1px; }
.apps button { width: 44px; border-bottom: 3px solid transparent; }
.apps svg { width: 24px; height: 24px; }
.apps .open { border-image: linear-gradient(90deg, transparent 4px, #76b4ea 4px, #76b4ea 40px, transparent 40px) 0 0 3 0; }
.apps .active { background: #48616a; border-image: none; border-color: #76b4ea; }
.tray { margin-left: auto; display: flex; align-items: center; padding-right: 12px; }
.tray button { width: 31px; height: 38px; }
.tray svg { width: 19px; height: 19px; }
.clock { width: 66px; display: flex; flex-direction: column; align-items: center; font-size: 11px; line-height: 17px; }
.tray .notice { width: 36px; }
</style>
